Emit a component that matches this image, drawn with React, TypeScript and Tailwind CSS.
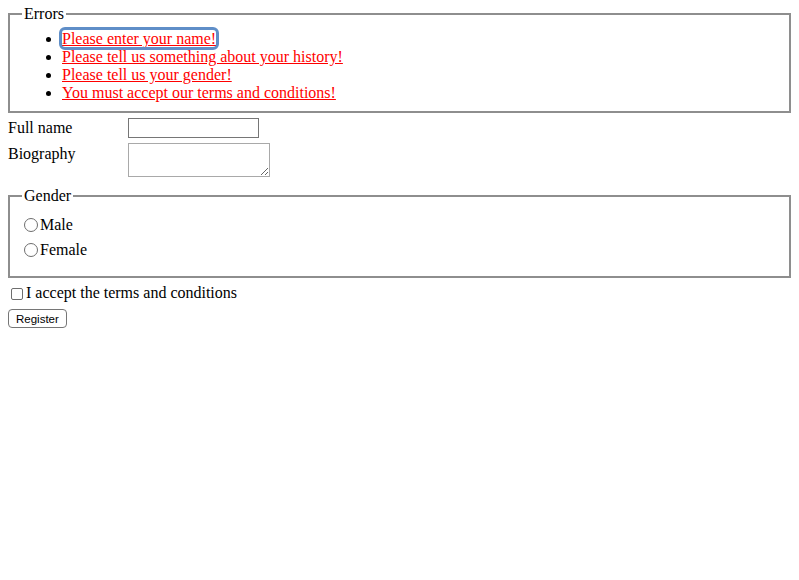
const errors = [
  "Please enter your name!",
  "Please tell us something about your history!",
  "Please tell us your gender!",
  "You must accept our terms and conditions!",
];

const App: React.FC = () => {
  return (
    <div className="min-h-[580px] bg-white px-2 pt-[5px] font-['Liberation_Serif',serif] text-[16px] leading-[18px] text-black">
      <fieldset className="border-2 border-[#8e8e8e] px-3 pt-[7px] pb-[9px]">
        <legend className="px-0.5 leading-[18px]">Errors</legend>
        <ul className="list-disc pl-10">
          {errors.map((err, i) => (
            <li key={err}>
              <a
                href="#"
                className={
                  i === 0
                    ? "text-[#ff0000] underline rounded-[3px] outline-[3px] outline-solid outline-[#5f8ec8]"
                    : "text-[#ff0000] underline"
                }
              >
                {err}
              </a>
            </li>
          ))}
        </ul>
      </fieldset>

      <div className="mt-[5px] flex items-start">
        <label className="w-[120px] pt-px">Full name</label>
        <input type="text" className="h-[20px] w-[131px] border border-[#767676] bg-white" />
      </div>
      <div className="mt-[4px] flex items-start">
        <label className="w-[120px] pt-[3px]">Biography</label>
        <textarea className="mt-px h-[34px] w-[142px] border border-[#a9a9a9] bg-white" />
      </div>

      <fieldset className="mt-[10px] border-2 border-[#8e8e8e] px-3 pt-[11px] pb-[17px]">
        <legend className="px-0.5 leading-[18px]">Gender</legend>
        <div className="flex flex-col gap-[7px]">
          <label className="flex items-center">
            <input type="radio" name="gender" className="ml-[2px] mr-[2px] h-[14px] w-[14px] appearance-none rounded-full border border-[#6e6e6e] bg-white" />
            Male
          </label>
          <label className="flex items-center">
            <input type="radio" name="gender" className="ml-[2px] mr-[2px] h-[14px] w-[14px] appearance-none rounded-full border border-[#6e6e6e] bg-white" />
            Female
          </label>
        </div>
      </fieldset>

      <label className="mt-[6px] flex items-center">
        <input type="checkbox" className="ml-[3px] mr-[3px] mt-px h-[12px] w-[12px] appearance-none rounded-[2px] border border-[#6e6e6e] bg-white" />
        I accept the terms and conditions
      </label>

      <button className="mt-[7px] h-[19px] rounded-[4px] border border-[#767676] bg-white px-[7px] font-['Liberation_Sans',sans-serif] text-[11.5px] leading-[16px] text-black">
        Register
      </button>
    </div>
  );
};

export default App;
